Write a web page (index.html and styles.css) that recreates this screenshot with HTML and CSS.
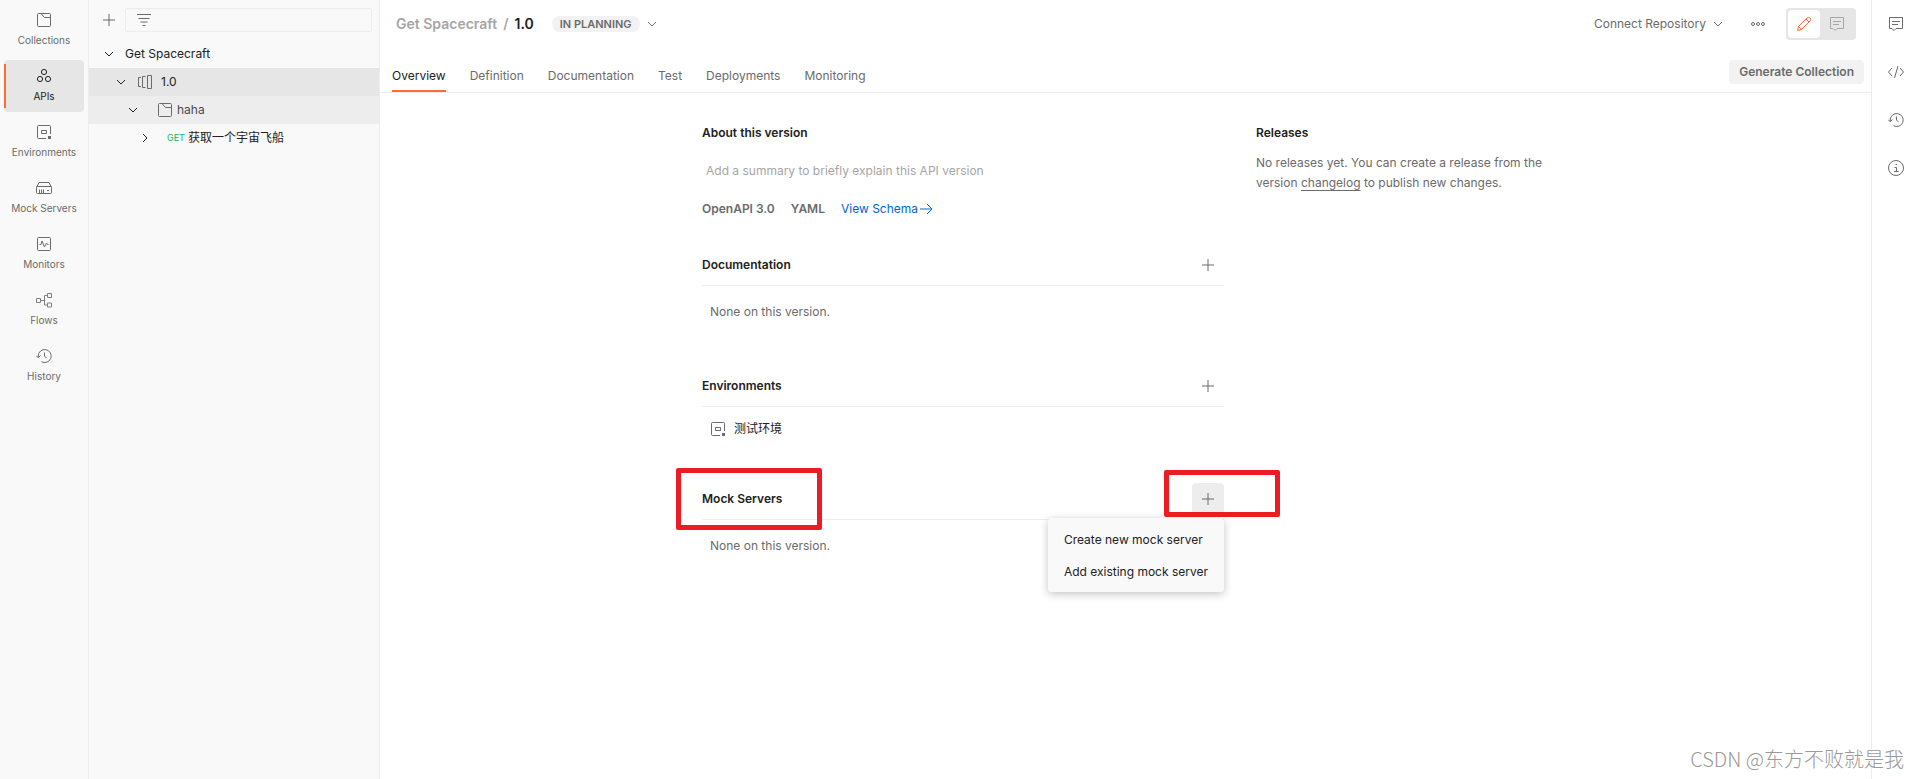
FILE: index.html
```html
<!DOCTYPE html>
<html lang="en">
<head>
<meta charset="utf-8">
<title>Get Spacecraft / 1.0</title>
<link rel="stylesheet" href="styles.css">
</head>
<body>
<svg class="sprite" aria-hidden="true">
  <symbol id="chevron" viewBox="0 0 16 16"><path d="M4 6l4 4 4-4"/></symbol>
  <symbol id="plus" viewBox="0 0 16 16"><path d="M8 2v12M2 8h12"/></symbol>
  <symbol id="folder" viewBox="0 0 16 16"><path d="M2.500 1.500h11a1 1 0 0 1 1 1v11a1 1 0 0 1-1 1h-11a1 1 0 0 1-1-1v-11a1 1 0 0 1 1-1zM5 1.500l3.500 4h6"/></symbol>
  <symbol id="env" viewBox="0 0 16 16"><path d="M14.500 10V2.500a1 1 0 0 0-1-1h-11a1 1 0 0 0-1 1v11a1 1 0 0 0 1 1H10M5.500 6.500h5v3h-5z"/><path fill="#6b6b6b" stroke="none" d="M12 12h3v3h-3z"/></symbol>
  <symbol id="history" viewBox="0 0 16 16"><path d="M2.200 9.500V8a6.500 6.500 0 1 1 3.300 5.700M0 7.500l2.200 2.200 2.300-2.200M8.500 4.500V8l2 2"/></symbol>
  <symbol id="comment" viewBox="0 0 16 16"><path d="M1.500 1.500h13v11H8l-2 2-2-2H1.500zM4 5.500h8M4 8.500h6"/></symbol>
</svg>
<div class="app">
  <nav class="nav" aria-label="Workspace">
    <button class="nav-item"><svg class="icon"><use href="#folder"/></svg>Collections</button>
    <button class="nav-item active"><svg class="icon" viewBox="0 0 16 16"><circle cx="8" cy="4" r="2.600"/><circle cx="4" cy="11" r="2.600"/><circle cx="12" cy="11" r="2.600"/></svg>APIs</button>
    <button class="nav-item"><svg class="icon"><use href="#env"/></svg>Environments</button>
    <button class="nav-item"><svg class="icon" viewBox="0 0 16 16"><path d="M.5 7.500v5a1 1 0 0 0 1 1h13a1 1 0 0 0 1-1v-5L13 2.500H3zM.5 6.500h15M3.500 9.500v4M5.500 9.500v4M7.500 9.500v4M11 10.500h2"/></svg>Mock Servers</button>
    <button class="nav-item"><svg class="icon" viewBox="0 0 16 16"><path d="M2.500 1.500h11a1 1 0 0 1 1 1v11a1 1 0 0 1-1 1h-11a1 1 0 0 1-1-1v-11a1 1 0 0 1 1-1zM3.500 8.500h1.500l1-3.500 2.500 6 2-4 1 1.500h1"/></svg>Monitors</button>
    <button class="nav-item"><svg class="icon light" viewBox="0 0 16 16"><path d="M.5 6.500h4v4h-4zM11.500 1.500h4v4h-4zM11.500 11h4v4h-4zM4.500 8.500H8M11.500 3.500H8.500v9.500h3"/></svg>Flows</button>
    <button class="nav-item"><svg class="icon"><use href="#history"/></svg>History</button>
  </nav>

  <aside class="sidebar">
    <div class="filter-row">
      <button class="icon-button" aria-label="Create API"><svg class="icon faint"><use href="#plus"/></svg></button>
      <label class="filter"><svg class="icon" viewBox="0 0 16 16"><path d="M1 2.500h14"/><path class="faint" d="M2.500 6.500h11M4.500 10h7"/><path d="M6.500 13.500h3"/></svg><input type="text" aria-label="Filter APIs"></label>
    </div>
    <ul class="tree">
      <li class="row level-0"><svg class="icon dark"><use href="#chevron"/></svg><span>Get Spacecraft</span></li>
      <li class="row level-1 selected"><svg class="icon dark"><use href="#chevron"/></svg><svg class="icon version" viewBox="0 0 16 16"><path d="M10.500 1.500h4v13h-4zM8.500 2.500h-3v11h3M4 3.500H1.500v9H4"/></svg><span>1.0</span></li>
      <li class="row level-2 hovered"><svg class="icon dark"><use href="#chevron"/></svg><svg class="icon folder"><use href="#folder"/></svg><span>haha</span></li>
      <li class="row level-3"><svg class="icon dark collapsed"><use href="#chevron"/></svg><span class="method">GET</span><span>获取一个宇宙飞船</span></li>
    </ul>
  </aside>

  <main class="main">
    <header class="titlebar">
      <h1 class="crumbs"><span class="parent">Get Spacecraft</span><span class="slash">/</span><span>1.0</span></h1>
      <button class="status"><span class="pill">IN PLANNING</span><svg class="icon"><use href="#chevron"/></svg></button>
      <button class="repo">Connect Repository<svg class="icon"><use href="#chevron"/></svg></button>
      <button class="icon-button more" aria-label="More actions"><svg class="icon" viewBox="0 0 16 16"><circle cx="3" cy="8" r="1.500"/><circle cx="8" cy="8" r="1.500"/><circle cx="13" cy="8" r="1.500"/></svg></button>
      <div class="toggle">
        <button class="on" aria-label="Edit"><svg class="icon" viewBox="0 0 16 16"><path d="M1.500 14.500l1-4 8.500-8.500a1.800 1.800 0 0 1 3 3l-8.500 8.500zM10 3l3 3M2.500 10.500l3 3"/></svg></button>
        <button aria-label="Comment"><svg class="icon"><use href="#comment"/></svg></button>
      </div>
    </header>
    <div class="tabbar">
      <nav class="tabs" aria-label="Version">
        <a class="tab current" href="#">Overview</a>
        <a class="tab" href="#">Definition</a>
        <a class="tab" href="#">Documentation</a>
        <a class="tab" href="#">Test</a>
        <a class="tab" href="#">Deployments</a>
        <a class="tab" href="#">Monitoring</a>
      </nav>
      <button class="generate">Generate Collection</button>
    </div>

    <div class="content">
      <div class="details">
        <section class="about">
          <h2>About this version</h2>
          <input class="summary" type="text" aria-label="Version summary" placeholder="Add a summary to briefly explain this API version">
          <div class="schema"><strong>OpenAPI 3.0</strong><strong>YAML</strong><a href="#">View Schema<svg class="icon arrow" viewBox="0 0 16 16"><path d="M2 8h12M9 3l5 5-5 5"/></svg></a></div>
        </section>
        <section class="block">
          <div class="block-head"><h2>Documentation</h2><button class="add" aria-label="Add documentation"><svg class="icon faint"><use href="#plus"/></svg></button></div>
          <p class="empty">None on this version.</p>
        </section>
        <section class="block">
          <div class="block-head"><h2>Environments</h2><button class="add" aria-label="Add environment"><svg class="icon faint"><use href="#plus"/></svg></button></div>
          <div class="env"><svg class="icon"><use href="#env"/></svg><span>测试环境</span></div>
        </section>
        <section class="block">
          <div class="block-head">
            <h2>Mock Servers</h2>
            <button class="add pressed" aria-label="Add mock server" aria-expanded="true"><svg class="icon faint"><use href="#plus"/></svg></button>
            <div class="menu"><button>Create new mock server</button><button>Add existing mock server</button></div>
            <div class="mark mark-title"></div>
            <div class="mark mark-add"></div>
          </div>
          <p class="empty">None on this version.</p>
        </section>
      </div>
      <section class="releases">
        <h2>Releases</h2>
        <p>No releases yet. You can create a release from the version <a href="#">changelog</a> to publish new changes.</p>
      </section>
    </div>
  </main>

  <aside class="rail">
    <button class="icon-button" aria-label="Comments"><svg class="icon"><use href="#comment"/></svg></button>
    <button class="icon-button" aria-label="Code"><svg class="icon" viewBox="0 0 16 16"><path d="M4 4L.5 8 4 12M12 4l3.500 4-3.500 4M10 2L6.500 14"/></svg></button>
    <button class="icon-button" aria-label="Changelog"><svg class="icon"><use href="#history"/></svg></button>
    <button class="icon-button" aria-label="Information"><svg class="icon" viewBox="0 0 16 16"><circle cx="8" cy="8" r="7.500"/><path d="M6.500 7.500h2v4M6 11.500h4.500M7.500 4.500h1.500"/></svg></button>
  </aside>
  <div class="watermark">CSDN @东方不败就是我</div>
</div>
</body>
</html>
```
FILE: styles.css
```css
* { box-sizing: border-box; }

body {
  margin: 0;
  font: 12px/20px Inter, "Noto Sans CJK SC", sans-serif;
  color: #212121;
  background: #fff;
}

h1, h2, p, ul { margin: 0; padding: 0; }
h2 { font-size: 12px; font-weight: 600; line-height: 20px; }

button {
  font: inherit;
  color: inherit;
  padding: 0;
  border: 0;
  background: none;
  cursor: pointer;
}

input {
  font: inherit;
  border: 0;
  outline: 0;
  background: none;
  min-width: 0;
}

.sprite { display: none; }

.icon {
  width: 16px;
  height: 16px;
  flex: none;
  fill: none;
  stroke: #6b6b6b;
  stroke-width: 1;
}
.dark { stroke: #212121; }
.light { stroke: #808080; }
.faint { stroke: #6b6b6b; }

.icon-button {
  display: flex;
  align-items: center;
  justify-content: center;
}

.app {
  position: relative;
  display: flex;
  min-height: 100vh;
}

/* Left navigation */
.nav {
  flex: none;
  width: 89px;
  padding: 4px;
  display: flex;
  flex-direction: column;
  gap: 4px;
  background: #f9f9f9;
  border-right: 1px solid #ededed;
}
.nav-item {
  position: relative;
  height: 52px;
  display: flex;
  flex-direction: column;
  align-items: center;
  justify-content: center;
  gap: 4px;
  border-radius: 4px;
  font-size: 10px;
  line-height: 16px;
  color: #6b6b6b;
}
.nav-item.active { background: #e6e6e6; color: #212121; }
.nav-item.active .icon { stroke: #212121; }
.nav-item.active::before {
  content: "";
  position: absolute;
  left: 0;
  top: 4px;
  bottom: 4px;
  width: 2px;
  background: #ff6c37;
}

/* API tree */
.sidebar {
  flex: none;
  width: 291px;
  background: #f9f9f9;
  border-right: 1px solid #ededed;
}
.filter-row {
  display: flex;
  align-items: center;
  gap: 8px;
  padding: 8px 7px 8px 12px;
}
.filter-row .icon-button { width: 16px; height: 24px; }
.filter {
  flex: 1;
  height: 24px;
  display: flex;
  align-items: center;
  gap: 8px;
  padding: 0 10px;
  border: 1px solid #ededed;
  border-radius: 2px;
}
.filter input { flex: 1; }
.tree { list-style: none; }
.row {
  height: 28px;
  display: flex;
  align-items: center;
}
.level-0 { padding-left: 12px; gap: 8px; }
.level-1 { padding-left: 24px; gap: 8px; }
.level-2 { padding-left: 36px; color: #4a4a4a; }
.level-3 { padding-left: 48px; }
.selected { background: #e6e6e6; }
.hovered { background: #ededed; }
.folder { margin: 0 4px 0 16px; }
.collapsed { transform: rotate(-90deg); }
.method {
  margin: 0 3px 0 14px;
  font-size: 9px;
  color: #0cbb52;
}

/* Main pane */
.main { flex: 1; min-width: 0; }
.titlebar {
  display: flex;
  align-items: center;
  height: 48px;
  padding: 0 15px 0 16px;
}
.crumbs {
  display: flex;
  gap: 6px;
  font-size: 14px;
  font-weight: 600;
  line-height: 20px;
}
.parent, .slash { color: #a6a6a6; }
.status {
  display: flex;
  align-items: center;
  gap: 4px;
  margin-left: 18px;
}
.pill {
  padding: 0 8px;
  border-radius: 8px;
  background: #f2f2f2;
  color: #6b6b6b;
  font-size: 11px;
  font-weight: 600;
  line-height: 16px;
}
.repo {
  display: flex;
  align-items: center;
  gap: 4px;
  margin-left: auto;
  color: #6b6b6b;
}
.more { margin: 0 20px 0 24px; }
.toggle {
  display: flex;
  padding: 2px;
  border-radius: 4px;
  background: #e6e6e6;
}
.toggle button {
  width: 34px;
  height: 28px;
  display: flex;
  align-items: center;
  justify-content: center;
  border-radius: 4px;
}
.toggle .icon { stroke: #a6a6a6; }
.toggle .on { width: 32px; background: #fff; }
.toggle .on .icon { stroke: #ff6c37; }

.tabbar {
  display: flex;
  align-items: flex-end;
  justify-content: space-between;
  height: 45px;
  padding: 0 7px 0 12px;
  border-bottom: 1px solid #ededed;
}
.tabs {
  display: flex;
  gap: 24px;
}
.tab {
  padding: 0 0 4px;
  border-bottom: 2px solid transparent;
  color: #6b6b6b;
  text-decoration: none;
}
.current { color: #212121; border-color: #ff6c37; }
.generate {
  height: 24px;
  margin-bottom: 8px;
  padding: 0 10px;
  border-radius: 4px;
  background: #f2f2f2;
  color: #6b6b6b;
  font-weight: 600;
}

.content {
  display: flex;
  gap: 32px;
  max-width: 847px;
  margin: 0 auto;
  padding-top: 30px;
}
.details { flex: 1; min-width: 0; }
.about {
  display: flex;
  flex-direction: column;
  gap: 18px;
  margin-bottom: 26px;
}
.summary { height: 20px; padding: 0 4px; }
.summary::placeholder { color: #a6a6a6; opacity: 1; }
.schema { display: flex; gap: 16px; color: #6b6b6b; }
.schema strong { font-weight: 600; }
.schema a {
  display: flex;
  align-items: center;
  color: #0265d2;
  text-decoration: none;
}
.arrow { stroke: #0265d2; }

.block { margin-bottom: 40px; }
.block-head {
  position: relative;
  display: flex;
  align-items: center;
  justify-content: space-between;
  height: 41px;
  border-bottom: 1px solid #ededed;
}
.add {
  width: 32px;
  height: 32px;
  display: flex;
  align-items: center;
  justify-content: center;
  border-radius: 4px;
}
.pressed { background: #ededed; }
.empty { padding: 16px 8px 4px; color: #6b6b6b; }
.env {
  display: flex;
  align-items: center;
  gap: 8px;
  padding: 12px 8px 0;
}

/* Dropdown under the add button */
.menu {
  position: absolute;
  right: 0;
  top: 39px;
  z-index: 1;
  display: flex;
  flex-direction: column;
  padding: 6px 0 4px;
  border-radius: 4px;
  background: #f9f9f9;
  box-shadow: 0 2px 8px rgba(0, 0, 0, .24);
}
.menu button {
  height: 32px;
  padding: 0 16px;
  text-align: left;
  white-space: nowrap;
}

/* Red highlight frames */
.mark {
  position: absolute;
  z-index: 2;
  border: 5px solid #ed1c24;
  border-radius: 2px;
  pointer-events: none;
}
.mark-title { left: -26px; top: -11px; width: 146px; height: 62px; }
.mark-add { right: -56px; top: -9px; width: 116px; height: 47px; }

.releases { flex: none; width: 293px; }
.releases p { margin-top: 10px; color: #6b6b6b; }
.releases a {
  color: inherit;
  text-underline-offset: 3px;
  text-decoration-skip-ink: none;
}

/* Right rail */
.rail {
  flex: none;
  width: 48px;
  border-left: 1px solid #ededed;
}
.rail .icon-button { width: 100%; height: 48px; }

.watermark {
  position: absolute;
  right: 15px;
  bottom: 6px;
  z-index: 3;
  font: 20px/28px "Noto Sans CJK SC", sans-serif;
  font-weight: 300;
  color: #999;
  text-shadow: -1px -1px 0 #fff;
}
```
